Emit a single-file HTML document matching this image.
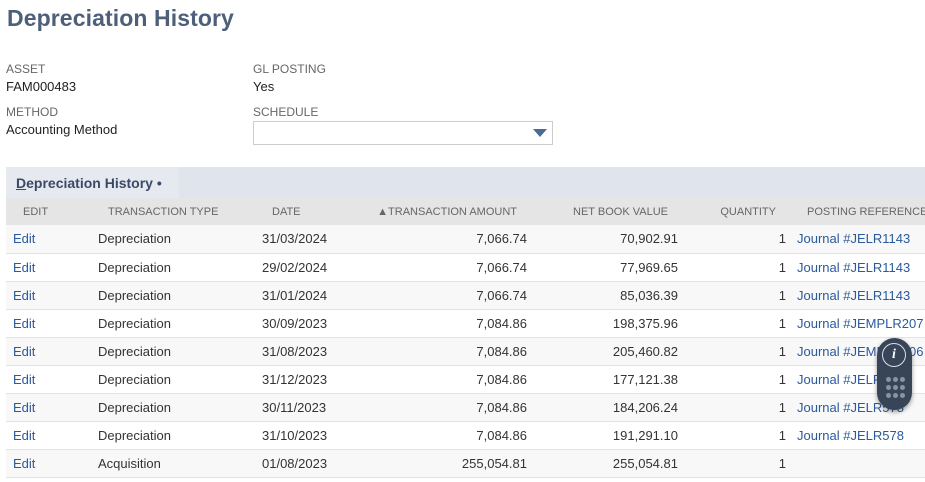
<html><head><style>
body{margin:0;width:925px;height:482px;overflow:hidden;background:#fff;font-family:"Liberation Sans",sans-serif;color:#333;position:relative}
.t{position:absolute;left:7px;top:5px;font-size:23px;font-weight:bold;color:#4d5f79;letter-spacing:0.1px}
.l{position:absolute;font-size:12px;color:#666}
.v{position:absolute;font-size:13px;color:#222}
.sel{position:absolute;left:253px;top:121px;width:298px;height:22px;border:1px solid #ccc}
.sel:after{content:"";position:absolute;right:5px;top:7px;border-left:7px solid transparent;border-right:7px solid transparent;border-top:8px solid #4d6a93}
.bar{position:absolute;left:6px;top:167px;width:919px;height:31px;background:#dfe4ed}
.tab{position:absolute;left:6px;top:167px;width:173px;height:31px;background:#e6e9ef;font-size:14px;font-weight:bold;color:#3a4a66}
.tab span{position:absolute;left:10px;top:8px}
table{position:absolute;left:6px;top:198px;width:919px;border-collapse:collapse;font-size:13px;table-layout:fixed}
th{background:#e5e5e5;height:27px;font-size:11px;font-weight:normal;color:#666;text-align:left;padding:0 0 0 10px;box-sizing:border-box;white-space:nowrap;overflow:hidden}
th.r{padding:0 10px 0 0}
td{height:28px;border-bottom:1px solid #e3e3e3;padding:0;color:#333;box-sizing:border-box;white-space:nowrap;overflow:hidden}
tr:nth-child(even) td{background:#f8f8f8}
.a{color:#2a5a9c}
.r{text-align:right}
.w{position:absolute;left:877px;top:338px;width:35px;height:72px;border-radius:18px;background:#384558;box-shadow:0 2px 5px rgba(0,0,0,.4)}
.i{position:absolute;left:5px;top:5px;width:22px;height:22px;border:1.5px solid #dde;border-radius:50%;color:#fff;font:italic bold 14px "Liberation Serif",serif;text-align:center;line-height:22px}
.d{position:absolute;width:5px;height:5px;border-radius:50%;background:#8a93a3}
</style></head><body>
<div class="t">Depreciation History</div>
<div class="l" style="left:6px;top:62px">ASSET</div><div class="v" style="left:6px;top:79px">FAM000483</div>
<div class="l" style="left:6px;top:105px">METHOD</div><div class="v" style="left:6px;top:122px">Accounting Method</div>
<div class="l" style="left:253px;top:62px">GL POSTING</div><div class="v" style="left:253px;top:79px">Yes</div>
<div class="l" style="left:253px;top:105px">SCHEDULE</div><div class="sel"></div>
<div class="bar"></div><div class="tab"><span><u>D</u>epreciation History •</span></div>
<table>
<colgroup><col style="width:7px"><col style="width:85px"><col style="width:164px"><col style="width:109px"><col style="width:156px"><col style="width:151px"><col style="width:108px"><col style="width:11px"><col></colgroup>
<tr><th style="padding:0"></th><th>EDIT</th><th>TRANSACTION TYPE</th><th>DATE</th><th class="r">▲TRANSACTION AMOUNT</th><th class="r">NET BOOK VALUE</th><th class="r">QUANTITY</th><th style="padding:0"></th><th>POSTING REFERENCE</th></tr>
<tr><td></td><td class="a">Edit</td><td>Depreciation</td><td>31/03/2024</td><td class="r">7,066.74</td><td class="r">70,902.91</td><td class="r">1</td><td></td><td class="a">Journal #JELR1143</td></tr>
<tr><td></td><td class="a">Edit</td><td>Depreciation</td><td>29/02/2024</td><td class="r">7,066.74</td><td class="r">77,969.65</td><td class="r">1</td><td></td><td class="a">Journal #JELR1143</td></tr>
<tr><td></td><td class="a">Edit</td><td>Depreciation</td><td>31/01/2024</td><td class="r">7,066.74</td><td class="r">85,036.39</td><td class="r">1</td><td></td><td class="a">Journal #JELR1143</td></tr>
<tr><td></td><td class="a">Edit</td><td>Depreciation</td><td>30/09/2023</td><td class="r">7,084.86</td><td class="r">198,375.96</td><td class="r">1</td><td></td><td class="a">Journal #JEMPLR207</td></tr>
<tr><td></td><td class="a">Edit</td><td>Depreciation</td><td>31/08/2023</td><td class="r">7,084.86</td><td class="r">205,460.82</td><td class="r">1</td><td></td><td class="a">Journal #JEMPLR206</td></tr>
<tr><td></td><td class="a">Edit</td><td>Depreciation</td><td>31/12/2023</td><td class="r">7,084.86</td><td class="r">177,121.38</td><td class="r">1</td><td></td><td class="a">Journal #JELR578</td></tr>
<tr><td></td><td class="a">Edit</td><td>Depreciation</td><td>30/11/2023</td><td class="r">7,084.86</td><td class="r">184,206.24</td><td class="r">1</td><td></td><td class="a">Journal #JELR578</td></tr>
<tr><td></td><td class="a">Edit</td><td>Depreciation</td><td>31/10/2023</td><td class="r">7,084.86</td><td class="r">191,291.10</td><td class="r">1</td><td></td><td class="a">Journal #JELR578</td></tr>
<tr><td></td><td class="a">Edit</td><td>Acquisition</td><td>01/08/2023</td><td class="r">255,054.81</td><td class="r">255,054.81</td><td class="r">1</td><td></td><td></td></tr>
</table>
<div class="w"><div class="i">i</div>
<div class="d" style="left:9px;top:39px"></div><div class="d" style="left:16px;top:39px"></div><div class="d" style="left:23px;top:39px"></div>
<div class="d" style="left:9px;top:47px"></div><div class="d" style="left:16px;top:47px"></div><div class="d" style="left:23px;top:47px"></div>
<div class="d" style="left:9px;top:55px"></div><div class="d" style="left:16px;top:55px"></div><div class="d" style="left:23px;top:55px"></div></div>
</body></html>
